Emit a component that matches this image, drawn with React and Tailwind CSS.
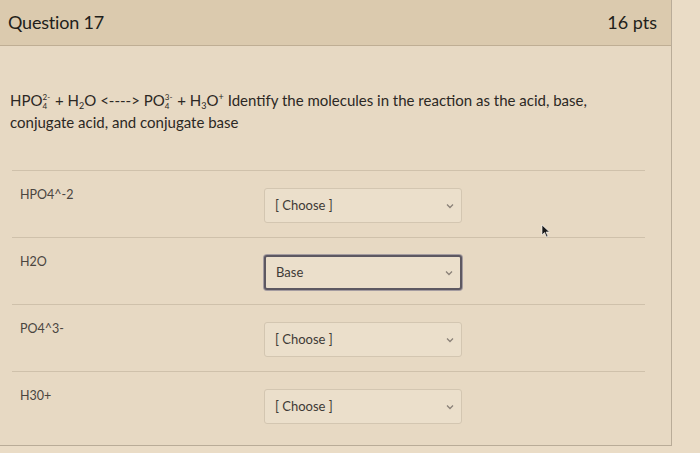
import React from 'react';

const rows = [
  { label: 'HPO4^-2', value: '[ Choose ]', focused: false },
  { label: 'H2O', value: 'Base', focused: true },
  { label: 'PO4^3-', value: '[ Choose ]', focused: false },
  { label: 'H30+', value: '[ Choose ]', focused: false },
];

const Chevron = () => (
  <svg width="10" height="10" viewBox="0 0 10 10" className="text-[#8a8178]">
    <path d="M2 3.5 L5 6.5 L8 3.5" fill="none" stroke="currentColor" strokeWidth="1.3" />
  </svg>
);

// superscript stacked over subscript, like a chemistry ion
const Ion = ({ sup, sub }) => (
  <>
    <sub className="text-[8px] -bottom-[3px]">{sub}</sub>
    <sup className="text-[8px] -top-[6px] -ml-[4.5px] mr-[1px]">{sup}</sup>
  </>
);

const Select = ({ value, focused }) => (
  <div
    className={`w-[198px] h-[35px] flex items-center justify-between pl-[10px] pr-[6px] rounded-[3px] bg-[#ebdfcb] ${
      focused ? 'border-2 border-[#5d5861] shadow-[0_0_0_1px_#a49ca0]' : 'border border-[#d3c6b1]'
    }`}
  >
    <span className="text-[13px] text-[#3e3a36]">{value}</span>
    <Chevron />
  </div>
);

const App = () => {
  return (
    <div
      className="w-[700px] h-[453px] bg-[#eadcc6] overflow-hidden relative"
      style={{ fontFamily: 'Lato, "Open Sans", sans-serif' }}
    >
      <div className="w-[672px] h-[446px] bg-[#e7d9c3] border-r border-b border-[#b9ac98] flex flex-col">
        {/* Header */}
        <div className="h-[46px] bg-[#dbcaae] border-b border-[#bfae94] flex items-center justify-between pl-[8px] pr-[14px]">
          <h2 className="text-[18px] text-[#221e1a] tracking-[-0.2px]">Question 17</h2>
          <span className="text-[18px] text-[#221e1a]">16 pts</span>
        </div>

        {/* Question text */}
        <div className="pl-[10px] pt-[43px] pr-[20px] text-[15px] leading-[22px] text-[#2c2824]">
          <p>
            HPO<Ion sup="2-" sub="4" /> + H<sub className="text-[9px] -bottom-[3px]">2</sub>O &lt;----&gt; PO
            <Ion sup="3-" sub="4" /> + H<sub className="text-[9px] -bottom-[3px]">3</sub>O
            <sup className="text-[9px] -top-[6px]">+</sup> Identify the molecules in the reaction as the acid, base,
          </p>
          <p>conjugate acid, and conjugate base</p>
        </div>

        {/* Answer rows */}
        <div className="mt-[37px] ml-[12px] mr-[26px]">
          {rows.map((r, i) => (
            <div key={i} className="h-[67px] border-t border-[#cfc1ab] flex items-start">
              <div className="w-[252px] pl-[8px] pt-[15px] text-[12.5px] text-[#4a453f]">{r.label}</div>
              <div className="pt-[17px]">
                <Select value={r.value} focused={r.focused} />
              </div>
            </div>
          ))}
        </div>
      </div>

      {/* mouse cursor */}
      <svg className="absolute left-[541px] top-[224px]" width="10" height="14" viewBox="0 0 10 14">
        <path d="M1 1 L1 11 L3.5 8.5 L5.5 13 L7 12.3 L5 8 L8.5 8 Z" fill="#1a1a1a" stroke="#fff" strokeWidth="0.6" />
      </svg>
    </div>
  );
};

export default App;
